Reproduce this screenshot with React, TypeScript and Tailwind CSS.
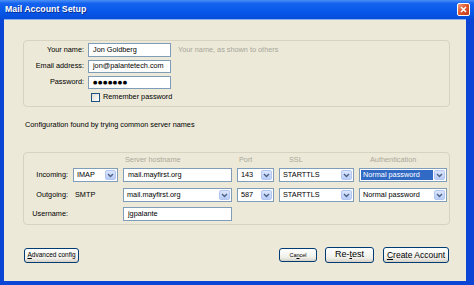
import React from "react";

const Chevron: React.FC = () => (
  <svg width="7" height="5" viewBox="0 0 7 5">
    <path d="M1 1 L3.5 3.5 L6 1" fill="none" stroke="#4d6185" strokeWidth="1.4" />
  </svg>
);

const DropButton: React.FC = () => (
  <div className="w-[11px] my-[1px] mr-[1px] flex items-center justify-center rounded-[2px] border border-[#b1c6f2] bg-[linear-gradient(to_bottom,#dbe5fd,#b9cdf8)]">
    <Chevron />
  </div>
);

const Select: React.FC<{ value: string; selected?: boolean; className?: string }> = ({
  value,
  selected,
  className,
}) => (
  <div className={`h-[14px] flex border border-[#7f9db9] bg-white ${className ?? ""}`}>
    <div className="flex-1 flex items-center pl-[1px] pr-[1px]">
      <span
        className={`w-full leading-[10px] pl-[2px] ${selected ? "bg-[#316ac5] text-white" : "text-black"}`}
      >
        {value}
      </span>
    </div>
    <DropButton />
  </div>
);

const TextBox: React.FC<{ value: string; className?: string }> = ({ value, className }) => (
  <div
    className={`h-[14px] flex items-center pl-[4px] border border-[#7f9db9] bg-white text-black ${className ?? ""}`}
  >
    {value}
  </div>
);

const XpButton: React.FC<{ className?: string; children: React.ReactNode }> = ({
  className,
  children,
}) => (
  <button
    className={`flex items-center justify-center rounded-[3px] border border-[#003c74] bg-[linear-gradient(to_bottom,#ffffff,#f0f0ea_70%,#d6d0c5)] text-black ${className ?? ""}`}
  >
    {children}
  </button>
);

export default function App() {
  return (
    <div className="w-[474px] h-[285px] flex flex-col bg-[#0a45d6] font-['Liberation_Sans',Arial,sans-serif] text-[7.3px] text-black overflow-hidden">
      {/* title bar */}
      <div className="h-[19px] flex items-center pl-[5px] pr-[4px] bg-[linear-gradient(to_bottom,#4a90f7,#1462ee_18%,#0758ea_60%,#044cd9)]">
        <span className="flex-1 text-white font-bold text-[8.8px] [text-shadow:1px_1px_0_#0a2a8a]">
          Mail Account Setup
        </span>
        <div className="w-[13px] h-[13px] rounded-[2px] border border-white flex items-center justify-center bg-[linear-gradient(to_bottom_right,#f0a080,#e0582f_45%,#c7371a)]">
          <svg width="7" height="7" viewBox="0 0 7 7">
            <path d="M1 1 L6 6 M6 1 L1 6" stroke="white" strokeWidth="1.6" />
          </svg>
        </div>
      </div>

      {/* client area */}
      <div className="flex-1 ml-[4px] mr-[8px] mb-[4px] border-t border-[#8fb0ee] bg-[#ece9d8] pl-[19px] pr-[16px] pt-[20px] flex flex-col">
        {/* identity box */}
        <div className="h-[67px] rounded-[4px] border border-[#d6d3c2] pt-[2px] flex flex-col gap-[3px]">
          <div className="flex items-center h-[14px]">
            <label className="w-[60px] text-right">Your name:</label>
            <TextBox value="Jon Goldberg" className="ml-[4px] w-[83px]" />
            <span className="ml-[7px] text-[#a8a69a]">Your name, as shown to others</span>
          </div>
          <div className="flex items-center h-[13px]">
            <label className="w-[60px] text-right">Email address:</label>
            <TextBox value="jon@palantetech.com" className="ml-[4px] w-[83px] !h-[13px]" />
          </div>
          <div className="flex items-center h-[13px]">
            <label className="w-[60px] text-right">Password:</label>
            <div className="ml-[4px] w-[83px] h-[13px] flex items-center pl-[4px] border border-[#7f9db9] bg-white">
              <span className="font-['DejaVu_Sans',sans-serif] text-[5px] tracking-[0.6px] leading-[5px]">
                ●●●●●●●
              </span>
            </div>
          </div>
          <div className="flex items-center h-[10px] ml-[67px]">
            <div className="w-[9px] h-[9px] border border-[#1c5180] bg-[linear-gradient(to_bottom_right,#dcdcd6,#ffffff)]" />
            <span className="ml-[3px]">Remember password</span>
          </div>
        </div>

        <p className="mt-[13px] h-[10px] pl-[2px] leading-[10px]">
          Configuration found by trying common server names
        </p>

        {/* server box */}
        <div className="mt-[22px] h-[73px] rounded-[4px] border border-[#d6d3c2] pt-[2px] flex flex-col">
          <div className="grid grid-cols-[44px_45px_109px_37px_75px_88px] gap-x-[5px] h-[11px] items-center text-[#aca899]">
            <span />
            <span />
            <span className="pl-[2px]">Server hostname</span>
            <span className="pl-[2px]">Port</span>
            <span className="pl-[10px]">SSL</span>
            <span className="pl-[11px]">Authentication</span>
          </div>
          <div className="mt-[2px] grid grid-cols-[44px_45px_109px_37px_75px_88px] gap-x-[5px] items-center">
            <span className="text-right">Incoming:</span>
            <Select value="IMAP" />
            <TextBox value="mail.mayfirst.org" />
            <Select value="143" />
            <Select value="STARTTLS" />
            <Select value="Normal password" selected />
          </div>
          <div className="mt-[6px] grid grid-cols-[44px_45px_109px_37px_75px_88px] gap-x-[5px] items-center">
            <span className="text-right">Outgoing:</span>
            <span className="pl-[2px]">SMTP</span>
            <Select value="mail.mayfirst.org" />
            <Select value="587" />
            <Select value="STARTTLS" />
            <Select value="Normal password" />
          </div>
          <div className="mt-[5px] grid grid-cols-[44px_45px_109px] gap-x-[5px] items-center">
            <span className="text-right">Username:</span>
            <span />
            <TextBox value="jgpalante" />
          </div>
        </div>

        {/* buttons */}
        <div className="mt-[22px] flex items-center">
          <XpButton className="ml-[1px] w-[55px] h-[15px] text-[6.5px]">
            <span>
              <span className="underline">A</span>dvanced config
            </span>
          </XpButton>
          <div className="flex-1" />
          <XpButton className="w-[38px] h-[14px] text-[5.5px]">
            <span>
              Ca<span className="underline">n</span>cel
            </span>
          </XpButton>
          <XpButton className="ml-[8px] w-[49px] h-[16px] text-[9px]">
            <span>
              Re-<span className="underline">t</span>est
            </span>
          </XpButton>
          <XpButton className="ml-[9px] mr-[1px] w-[66px] h-[16px] text-[8.5px]">
            <span>
              <span className="underline">C</span>reate Account
            </span>
          </XpButton>
        </div>
      </div>
    </div>
  );
}
